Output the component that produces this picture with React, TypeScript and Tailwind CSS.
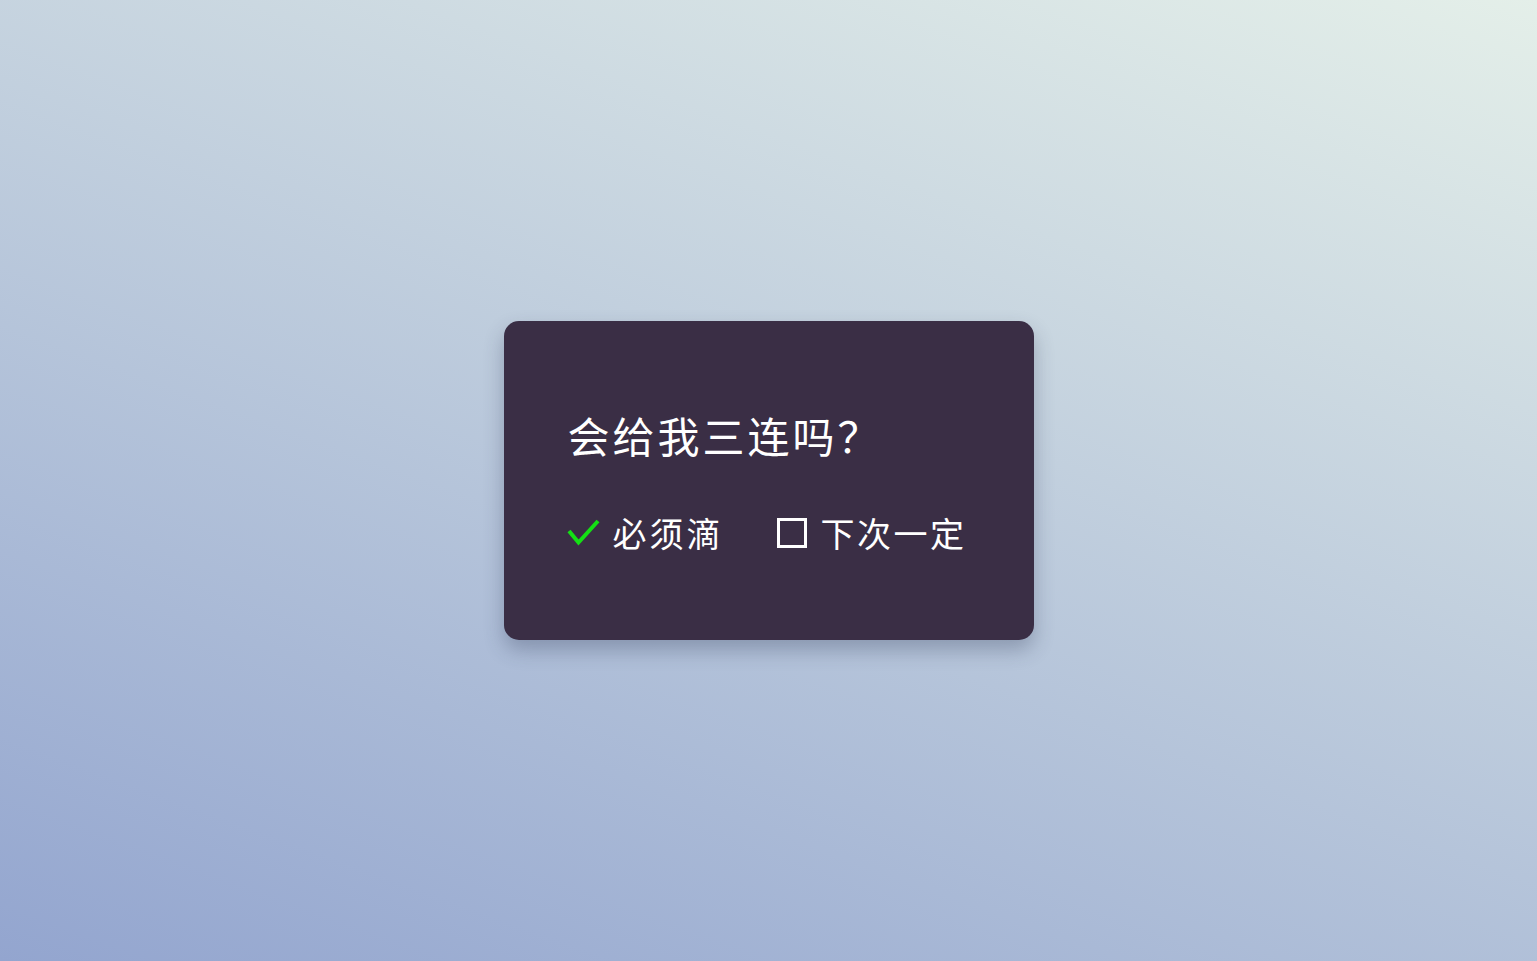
import React from "react";

const font = "font-['Noto_Sans_CJK_SC','Noto_Sans',sans-serif]";

function CheckIcon() {
  return (
    <svg width="34" height="30" viewBox="0 0 34 30" fill="none" className="shrink-0">
      <path d="M3 13 L12.5 24.5 L32 3" stroke="#14e014" strokeWidth="4" strokeLinecap="butt" />
    </svg>
  );
}

function EmptyBox() {
  return <span className="block h-[30px] w-[30px] shrink-0 border-[3px] border-white" />;
}

export default function App() {
  return (
    <div
      className={`flex h-screen w-full items-center justify-center bg-[linear-gradient(20deg,#93a5cf_0%,#e4efe9_100%)] ${font}`}
    >
      <div className="flex h-[319px] w-[530px] flex-col rounded-[15px] bg-[#3a2e45] pl-16 pt-[93px] text-white shadow-[0_10px_20px_rgba(40,50,80,0.3)]">
        <h1 className="text-[42px] leading-none tracking-[3px]">会给我三连吗？</h1>
        <div className="mt-[59px] flex h-9 items-center">
          <label className="flex items-center gap-[13px]">
            <span className="-ml-[2px]">
              <CheckIcon />
            </span>
            <span className="text-[34px] leading-none tracking-[3px]">必须滴</span>
          </label>
          <label className="ml-[53px] flex items-center gap-[14px]">
            <EmptyBox />
            <span className="text-[34px] leading-none tracking-[2.5px]">下次一定</span>
          </label>
        </div>
      </div>
    </div>
  );
}
